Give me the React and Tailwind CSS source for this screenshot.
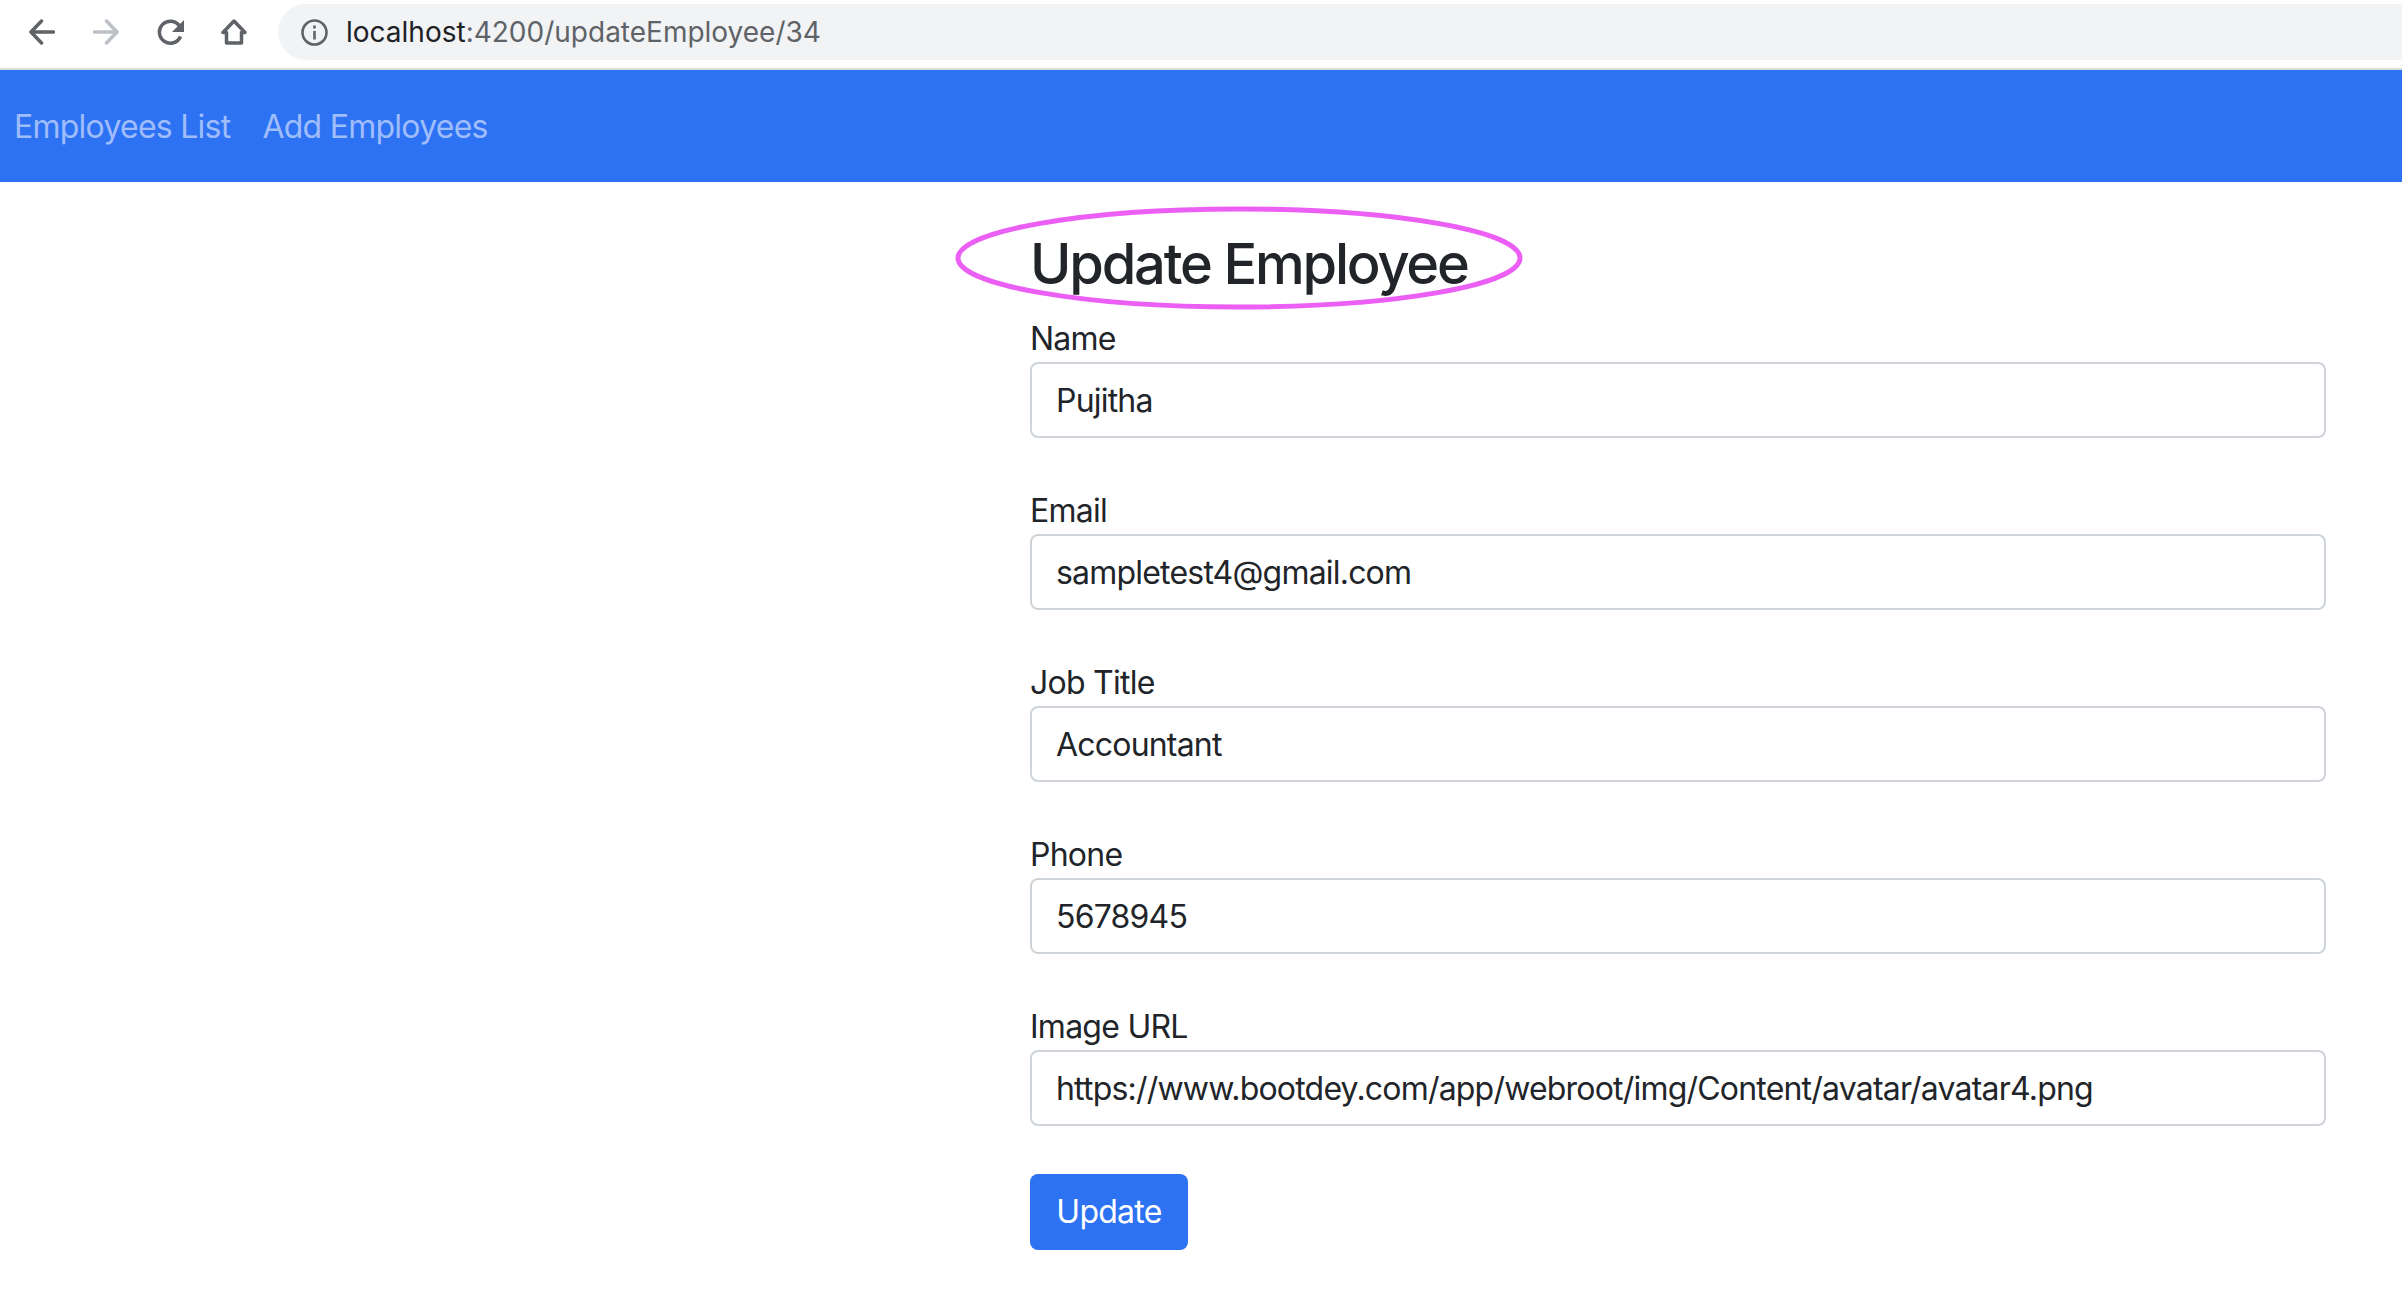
const fields = [
  { label: 'Name', value: 'Pujitha' },
  { label: 'Email', value: 'sampletest4@gmail.com' },
  { label: 'Job Title', value: 'Accountant' },
  { label: 'Phone', value: '5678945' },
  { label: 'Image URL', value: 'https://www.bootdey.com/app/webroot/img/Content/avatar/avatar4.png' },
];

const BrowserBar = () => (
  <div className="h-[70px] bg-white border-b-2 border-[#dadce0] flex items-start">
    <div className="flex items-center h-[56px] mt-1 pl-[29px] gap-[38px] w-[278px]">
      <svg width="26" height="26" viewBox="0 0 26 26" fill="none" stroke="#5f6368" strokeWidth="3.5" strokeLinecap="round" strokeLinejoin="round">
        <path d="M24.5 13H2.5M12.5 2L2 13l10.5 11" />
      </svg>
      <svg width="26" height="26" viewBox="0 0 26 26" fill="none" stroke="#bdc1c6" strokeWidth="3.5" strokeLinecap="round" strokeLinejoin="round">
        <path d="M1.5 13h22M13.5 2L24 13 13.5 24" />
      </svg>
      <svg width="27" height="27" viewBox="0 0 27 27" fill="none" stroke="#5f6368" strokeWidth="3.5">
        <path d="M23.5 17.5a11 11 0 1 1-1-10.5" />
        <path d="M27 1v12H15z" fill="#5f6368" stroke="none" />
      </svg>
      <svg className="-ml-px" width="26" height="26" viewBox="0 0 26 26" fill="none" stroke="#5f6368" strokeWidth="3.5" strokeLinejoin="round">
        <path d="M13 2L2 13.5h3.5V24h15V13.5H24z" />
      </svg>
    </div>
    <div className="flex-1 h-[56px] mt-1 bg-[#f1f3f4] rounded-l-[28px] flex items-center pl-[23px]">
      <svg width="27" height="27" viewBox="0 0 27 27" fill="none" stroke="#5f6368" strokeWidth="2.6">
        <circle cx="13.5" cy="13.5" r="12" />
        <path d="M13.5 12v8.5M13.5 6.5v3" />
      </svg>
      <span className="ml-[18px] text-[28px] leading-none tracking-normal text-[#5f6368]">
        <span className="text-[#202124]">localhost</span>:4200/updateEmployee/34
      </span>
    </div>
  </div>
);

export default function App() {
  return (
    <div className="min-h-[1310px] bg-white text-[#212529] tracking-[-0.75px] font-['Inter','Liberation_Sans',sans-serif]">
      <BrowserBar />
      <nav className="h-[112px] bg-[#2c72f3] flex items-center pl-[14px] pt-[2px] gap-[32px] text-[32px] text-[#a0bdfb]">
        <a>Employees List</a>
        <a>Add Employees</a>
      </nav>
      <main className="relative pl-[1030px] pr-[76px] pt-[44px]">
        <svg className="absolute left-[955px] top-[24px]" width="572" height="104" viewBox="0 0 572 104" fill="none">
          <ellipse cx="284" cy="52" rx="281" ry="49" stroke="#ec5ff5" strokeWidth="5" />
        </svg>
        <h2 className="text-[56px] leading-[76px] font-[550] tracking-[-2.2px] mb-[12px] relative">Update Employee</h2>
        {fields.map((f) => (
          <div key={f.label} className="mb-[48px]">
            <label className="block text-[32px] leading-[48px] pt-px -mb-px">{f.label}</label>
            <input
              readOnly
              value={f.value}
              className="block w-full h-[76px] px-[24px] text-[32px] tracking-[-0.8px] border-2 border-[#ced4da] rounded-lg bg-white text-[#212529]"
            />
          </div>
        ))}
        <button className="h-[76px] w-[158px] bg-[#2c72f3] text-white text-[32px] rounded-lg">Update</button>
      </main>
    </div>
  );
}
